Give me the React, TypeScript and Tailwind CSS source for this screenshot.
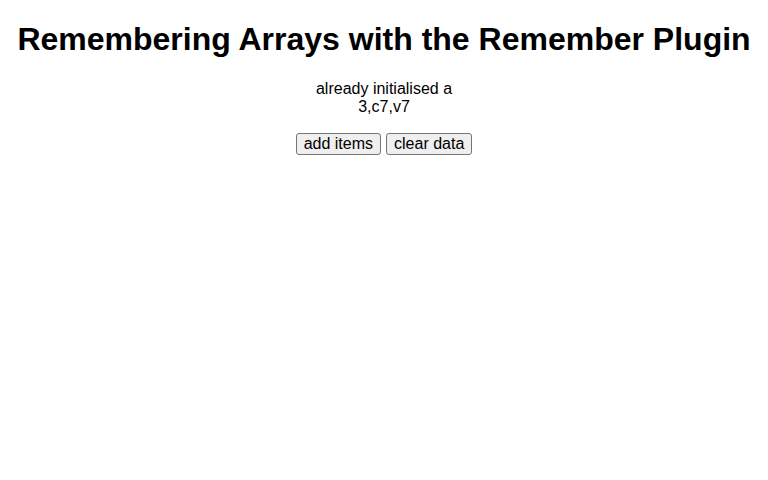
import React, { useState } from "react";

const App = () => {
  const [items, setItems] = useState<string[]>(["3", "c7", "v7"]);

  return (
    <div className="min-h-[480px] bg-white text-black text-center font-['Liberation_Sans',Arial,sans-serif] text-base leading-[18px]">
      <div className="pt-[21px]">
        <h1 className="text-[32px] font-bold leading-[37px] mb-[22px]">
          Remembering Arrays with the Remember Plugin
        </h1>
      </div>
      <div>already initialised a</div>
      <div>{items.join(",")}</div>
      <div className="mt-[17px] flex justify-center gap-[5px]">
        <button
          className="border border-[#767676] bg-[#efefef] rounded-[3px] px-[7px] h-[22px] leading-[18px] text-base"
          onClick={() => setItems([...items, "x" + items.length])}
        >
          add items
        </button>
        <button
          className="border border-[#767676] bg-[#efefef] rounded-[3px] px-[7px] h-[22px] leading-[18px] text-base"
          onClick={() => setItems([])}
        >
          clear data
        </button>
      </div>
    </div>
  );
};

export default App;
